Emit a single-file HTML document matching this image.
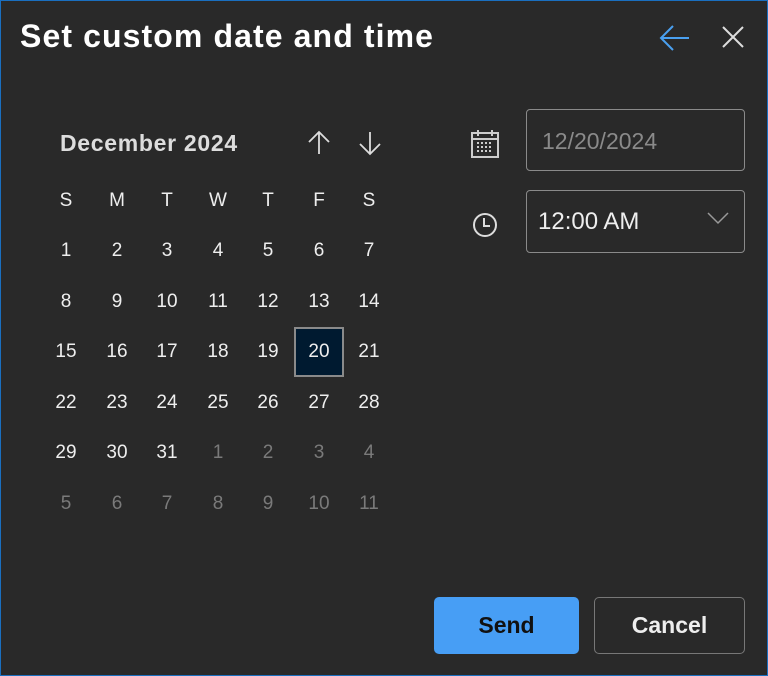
<!DOCTYPE html>
<html><head><meta charset="utf-8"><style>
*{margin:0;padding:0;box-sizing:border-box}
body{width:768px;height:676px;background:#292929;font-family:"Liberation Sans",sans-serif;position:relative;overflow:hidden;box-shadow:inset 0 0 0 1px #1a6fc0}
.t{position:absolute;left:20px;top:18px;font-size:32px;font-weight:bold;color:#fff;letter-spacing:1.1px}
.abs{position:absolute}
.mon{left:60px;top:130px;font-size:23px;font-weight:bold;color:#ddd;letter-spacing:0.7px}
.c{position:absolute;width:50px;height:50px;margin-left:-25px;margin-top:-25px;display:flex;align-items:center;justify-content:center;font-size:19px;color:#eee}
.g{color:#7a7a7a}
.sel{background:#001a30;border:2px solid #8a8a8a}
.box{position:absolute;border:1.5px solid #8a8a8a;border-radius:4px}
.btn{position:absolute;top:597px;height:57px;border-radius:5px;display:flex;align-items:center;justify-content:center;font-size:23px;font-weight:bold}
</style></head><body>
<div class="t">Set custom date and time</div>
<svg class="abs" style="left:658px;top:24px" width="34" height="28" viewBox="0 0 34 28"><path d="M31 14H3M15 2L3 14L15 26" stroke="#4aa0f0" stroke-width="2" fill="none"/></svg>
<svg class="abs" style="left:721px;top:25px" width="24" height="24" viewBox="0 0 24 24"><path d="M2 2L22 22M22 2L2 22" stroke="#ddd" stroke-width="2"/></svg>
<div class="abs mon">December 2024</div>
<svg class="abs" style="left:307px;top:130px" width="24" height="26" viewBox="0 0 24 26"><path d="M12 24V2M2 12L12 2L22 12" stroke="#ddd" stroke-width="1.8" fill="none"/></svg>
<svg class="abs" style="left:358px;top:130px" width="24" height="26" viewBox="0 0 24 26"><path d="M12 2V24M2 14L12 24L22 14" stroke="#ddd" stroke-width="1.8" fill="none"/></svg>
<div id="cal"></div>
<svg class="abs" style="left:470px;top:129px" width="30" height="30" viewBox="0 0 30 30"><rect x="2" y="4" width="26" height="24" fill="none" stroke="#ccc" stroke-width="2"/><path d="M2 10H28M8 1V7M22 1V7" stroke="#ccc" stroke-width="2"/><g fill="#ccc"><rect x="7" y="13" width="2" height="2"/><rect x="11" y="13" width="2" height="2"/><rect x="15" y="13" width="2" height="2"/><rect x="19" y="13" width="2" height="2"/><rect x="7" y="17" width="2" height="2"/><rect x="11" y="17" width="2" height="2"/><rect x="15" y="17" width="2" height="2"/><rect x="19" y="17" width="2" height="2"/><rect x="7" y="21" width="2" height="2"/><rect x="11" y="21" width="2" height="2"/><rect x="15" y="21" width="2" height="2"/><rect x="19" y="21" width="2" height="2"/></g></svg>
<svg class="abs" style="left:472px;top:212px" width="26" height="26" viewBox="0 0 26 26"><circle cx="13" cy="13" r="11" fill="none" stroke="#ddd" stroke-width="2"/><path d="M12 6V14H18" stroke="#ddd" stroke-width="2" fill="none"/></svg>
<div class="box" style="left:526px;top:109px;width:219px;height:62px"></div>
<div class="abs" style="left:542px;top:128px;font-size:23px;color:#8a8a8a">12/20/2024</div>
<div class="box" style="left:526px;top:190px;width:219px;height:63px"></div>
<div class="abs" style="left:538px;top:208px;font-size:24px;color:#eee">12:00 AM</div>
<svg class="abs" style="left:707px;top:211px" width="22" height="14" viewBox="0 0 22 14"><path d="M1 2L11 12L21 2" stroke="#999" stroke-width="1.5" fill="none"/></svg>
<div class="btn" style="left:434px;width:145px;background:#479ef5;color:#111">Send</div>
<div class="btn" style="left:594px;width:151px;border:1.5px solid #777;color:#eee">Cancel</div>
<script>
var xs=[66,117,167,218,268,319,369],h="";
var d=["S","M","T","W","T","F","S"];
for(var i=0;i<7;i++)h+='<div class="c" style="left:'+xs[i]+'px;top:201px">'+d[i]+'</div>';
var ys=[251,302,352,403,453,504];
for(var r=0;r<6;r++)for(var c=0;c<7;c++){var n=r*7+c+1,g=false;if(n>31){n-=31;g=true}
h+='<div class="c'+(g?' g':'')+(n==20&&!g?' sel':'')+'" style="left:'+xs[c]+'px;top:'+ys[r]+'px">'+n+'</div>';}
document.getElementById("cal").innerHTML=h;
</script>
</body></html>
